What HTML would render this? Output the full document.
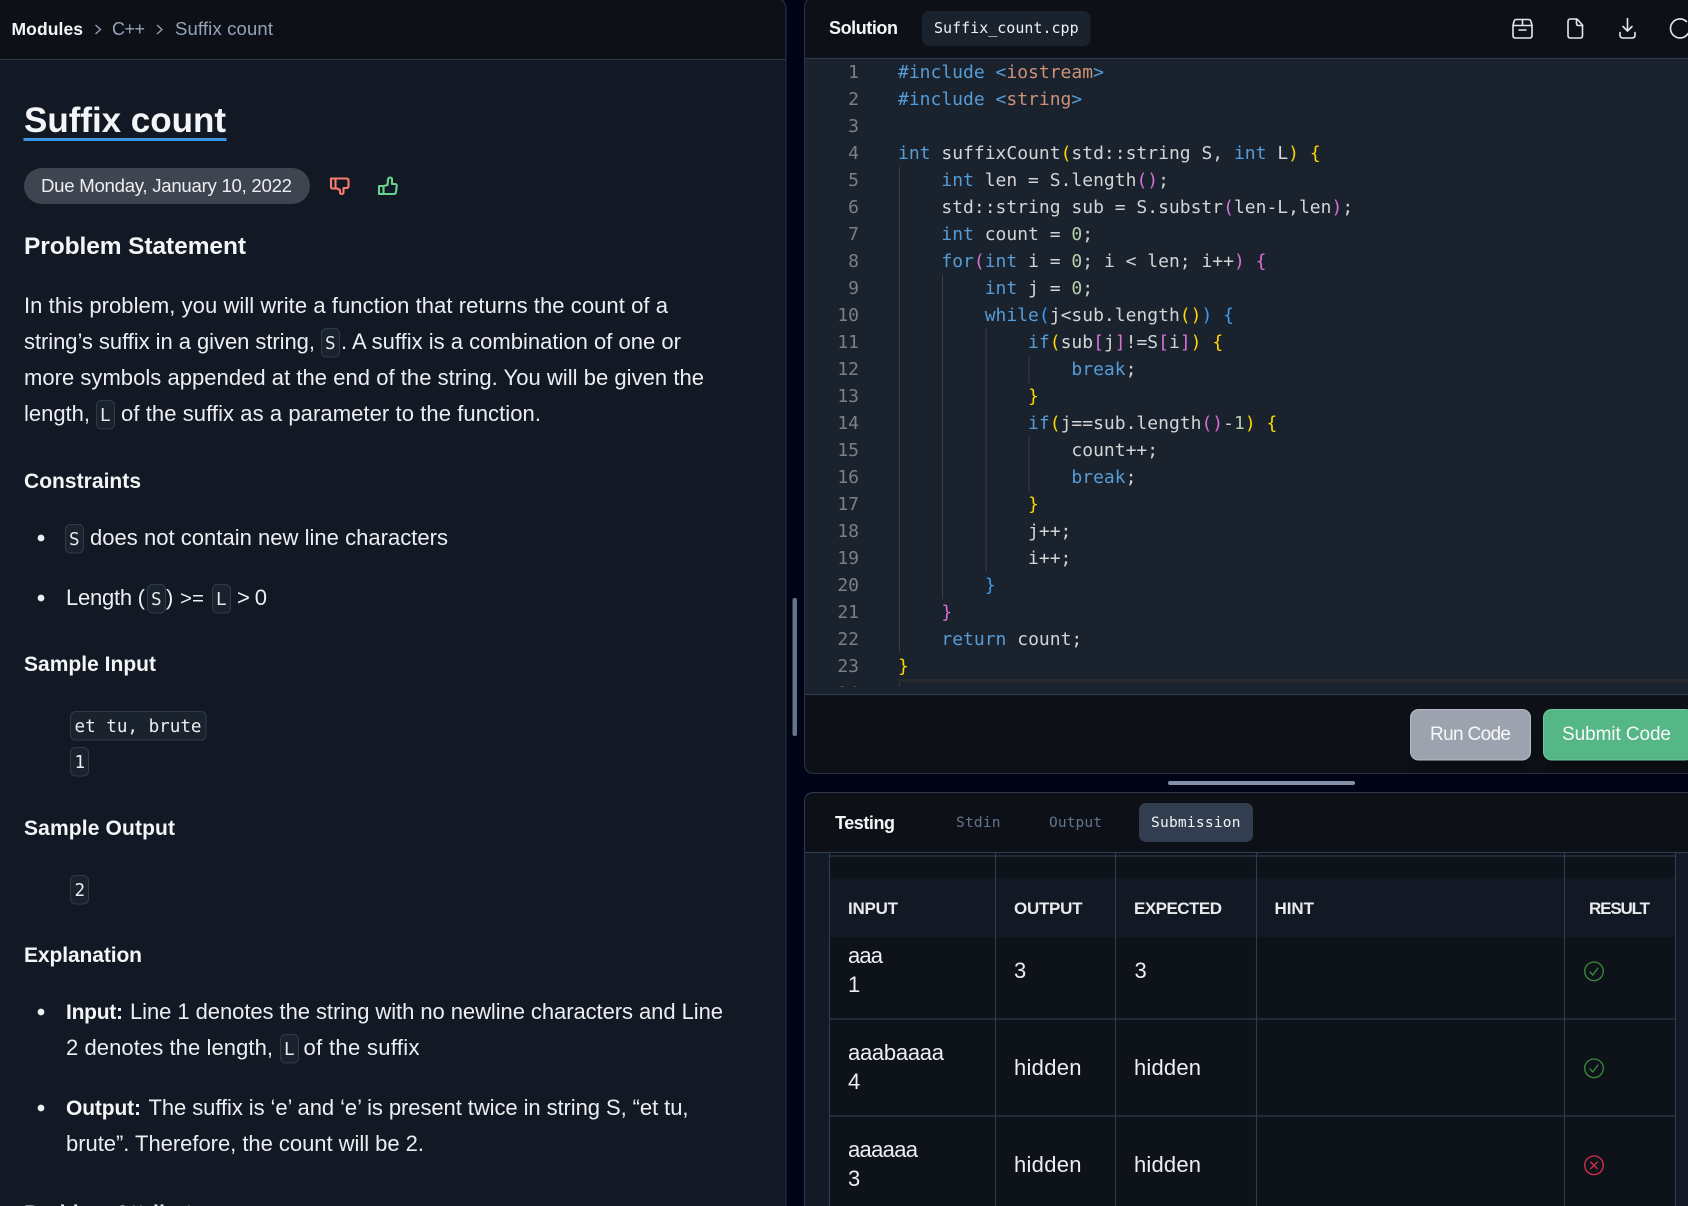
<!DOCTYPE html>
<html lang="en">
<head>
<meta charset="utf-8">
<title>Suffix count</title>
<style>
html,body{margin:0;padding:0;background:#010417;width:1688px;height:1206px;overflow:hidden}
svg{display:block}
text{white-space:pre}
.s{font-family:"Liberation Sans",sans-serif;font-size:22px;fill:#eceef1}
.h{font-family:"Liberation Sans",sans-serif;font-weight:700;fill:#f3f5f7}
.m{font-family:"DejaVu Sans Mono","Liberation Mono",monospace}
.c{font-family:"DejaVu Sans Mono","Liberation Mono",monospace;font-size:18px;fill:#d4d4d4}
.n{font-family:"DejaVu Sans Mono","Liberation Mono",monospace;font-size:18px;fill:#7b8087;text-anchor:end}
.k{fill:#569cd6}.t{fill:#ce9178}.g{fill:#b5cea8}.y{fill:#ffd700}.p{fill:#da70d6}.b{fill:#3f9cf0}
.cb{fill:#1a222e;stroke:#2f3a4c;stroke-width:1}
.th{font-family:"Liberation Sans",sans-serif;font-size:17px;font-weight:700;fill:#e8eaed}
.ln{stroke:#3a3f48;stroke-width:1}
.bd{stroke:#2f3a4c;stroke-width:1.2}
.ic{fill:none;stroke:#e5e7eb;stroke-width:1.6;stroke-linecap:round;stroke-linejoin:round}
</style>
</head>
<body>
<svg xmlns="http://www.w3.org/2000/svg" width="1688" height="1206" viewBox="0 0 1688 1206">
<defs>
<clipPath id="codeclip"><rect x="805" y="59" width="883" height="627.5"/></clipPath>
<filter id="sh" x="-20%" y="-20%" width="140%" height="160%"><feGaussianBlur stdDeviation="6"/></filter>
</defs>
<rect width="1688" height="1206" fill="#010417"/>

<!-- LEFT PANEL -->
<path d="M-2 -2H776Q786 -2 786 8V1208H-2Z" fill="#121924"/>
<path d="M-2 -2H776Q786 -2 786 8V59H-2Z" fill="#0d1117"/>
<path d="M776 -1Q786 -1 786 9V1208" fill="none" stroke="#2a3342" stroke-width="1"/>
<line x1="0" y1="59.5" x2="786" y2="59.5" stroke="#2f3a4c" stroke-width="1"/>

<text x="11.5" y="35" class="h" font-size="17.5" textLength="71.5">Modules</text>
<path d="M95.5 25L100.5 29.5L95.5 34" fill="none" stroke="#94a3b8" stroke-width="1.3"/>
<text x="112" y="35" class="s" style="font-size:18px;fill:#94a3b8" textLength="33">C++</text>
<path d="M157 25L162 29.5L157 34" fill="none" stroke="#94a3b8" stroke-width="1.3"/>
<text x="175" y="35" class="s" style="font-size:18.5px;fill:#94a3b8" textLength="98">Suffix count</text>

<text x="24" y="132" class="h" font-size="35" textLength="202">Suffix count</text>
<rect x="23.5" y="138" width="203" height="3" fill="#3f96e2"/>

<rect x="24" y="168" width="286" height="36" rx="18" fill="#3f4550"/>
<text x="41" y="192" class="s" style="font-size:18.6px" textLength="251">Due Monday, January 10, 2022</text>
<g fill="none" stroke="#f87c6f" stroke-width="2.1" stroke-linejoin="round" stroke-linecap="round">
<path d="M331 178.5H335.5V188.5H332.5Q331 188.5 331 187Z"/>
<path d="M335.5 178.5H346.5Q348.5 178.5 348.5 180.5V186Q348.5 188 346.5 188H343.5V192Q343.5 194 341.5 194Q340 194 340 192.5V190L337 188.5H335.5"/>
</g>
<g fill="none" stroke="#68d391" stroke-width="2.1" stroke-linejoin="round" stroke-linecap="round">
<path d="M379 186H383.5V194H379Z"/>
<path d="M383.5 186L387.5 185L388 179.5Q388.5 177.5 390 177.5Q392 177.5 392 179.5V184H395Q397 184 396.7 186L396 192Q395.7 194 394 194H383.5"/>
</g>

<text x="24" y="254" class="h" font-size="24.5" textLength="222">Problem Statement</text>

<text x="24" y="313" class="s" textLength="644">In this problem, you will write a function that returns the count of a</text>
<text x="24" y="349" class="s" textLength="291">string’s suffix in a given string,</text>
<rect x="321.5" y="328.5" width="18" height="28.5" rx="5" class="cb"/>
<text x="325" y="349" class="m" font-size="17.6" fill="#e8eaed">S</text>
<text x="341" y="349" class="s" textLength="340">. A suffix is a combination of one or</text>
<text x="24" y="385" class="s" textLength="680">more symbols appended at the end of the string. You will be given the</text>
<text x="24" y="421" class="s" textLength="66">length,</text>
<rect x="96.5" y="400.5" width="18" height="28.5" rx="5" class="cb"/>
<text x="100" y="421" class="m" font-size="17.6" fill="#e8eaed">L</text>
<text x="121" y="421" class="s" textLength="420">of the suffix as a parameter to the function.</text>

<text x="24" y="488" class="h" font-size="21" textLength="117">Constraints</text>
<circle cx="41" cy="538" r="3.4" fill="#eceef1"/>
<rect x="65.5" y="524.5" width="18" height="28.5" rx="5" class="cb"/>
<text x="69" y="545" class="m" font-size="17.6" fill="#e8eaed">S</text>
<text x="90" y="545" class="s" textLength="358">does not contain new line characters</text>

<circle cx="41" cy="598" r="3.4" fill="#eceef1"/>
<text x="66" y="605" class="s" textLength="79">Length (</text>
<rect x="147.5" y="584.5" width="18" height="28.5" rx="5" class="cb"/>
<text x="151" y="605" class="m" font-size="17.6" fill="#e8eaed">S</text>
<text x="166" y="605" class="s">)</text>
<text x="180" y="605" class="s" style="font-size:20.5px" textLength="24">&gt;=</text>
<rect x="212.5" y="584.5" width="18" height="28.5" rx="5" class="cb"/>
<text x="216" y="605" class="m" font-size="17.6" fill="#e8eaed">L</text>
<text x="237" y="605" class="s" textLength="30">&gt; 0</text>

<text x="24" y="671" class="h" font-size="21" textLength="132">Sample Input</text>
<rect x="70.5" y="711.5" width="135.5" height="28.5" rx="5" class="cb"/>
<text x="74.5" y="732" class="m" font-size="17.6" fill="#eceef1" textLength="127">et tu, brute</text>
<rect x="70.5" y="747.5" width="18" height="28.5" rx="5" class="cb"/>
<text x="74.5" y="768" class="m" font-size="17.6" fill="#eceef1">1</text>

<text x="24" y="835" class="h" font-size="21" textLength="151">Sample Output</text>
<rect x="70.5" y="875.5" width="18" height="28.5" rx="5" class="cb"/>
<text x="74.5" y="896" class="m" font-size="17.6" fill="#eceef1">2</text>

<text x="24" y="962" class="h" font-size="21" textLength="118">Explanation</text>
<circle cx="41" cy="1012" r="3.4" fill="#eceef1"/>
<text x="66" y="1019" class="h" font-size="21" textLength="57">Input:</text>
<text x="130" y="1019" class="s" textLength="593">Line 1 denotes the string with no newline characters and Line</text>
<text x="66" y="1055" class="s" textLength="207">2 denotes the length,</text>
<rect x="280.5" y="1034.5" width="18" height="28.5" rx="5" class="cb"/>
<text x="284" y="1055" class="m" font-size="17.6" fill="#e8eaed">L</text>
<text x="303.5" y="1055" class="s" textLength="116">of the suffix</text>
<circle cx="41" cy="1108" r="3.4" fill="#eceef1"/>
<text x="66" y="1115" class="h" font-size="21" textLength="75">Output:</text>
<text x="148.5" y="1115" class="s" textLength="540">The suffix is ‘e’ and ‘e’ is present twice in string S, “et tu,</text>
<text x="66" y="1151" class="s" textLength="358">brute”. Therefore, the count will be 2.</text>
<text x="24" y="1220" class="h" font-size="21" textLength="192">Problem Attributes</text>

<rect x="792.5" y="598" width="4.5" height="138" rx="2" fill="#64748b"/>

<!-- RIGHT TOP PANEL -->
<path d="M804.5 -2H1700V773.5H814.5Q804.5 773.5 804.5 763.5V8Q804.5 -2 814.5 -2Z" fill="#0d1117" stroke="#2a3342" stroke-width="1"/>
<rect x="805" y="59" width="883" height="635" fill="#1a222e"/>
<line x1="805" y1="58.5" x2="1688" y2="58.5" stroke="#2f3a4c" stroke-width="1.2"/>
<line x1="805" y1="694.5" x2="1688" y2="694.5" stroke="#2f3a4c" stroke-width="1.2"/>

<text x="829" y="34" class="h" font-size="18" textLength="69">Solution</text>
<rect x="922" y="11" width="168.5" height="35" rx="7" fill="#1a222e"/>
<text x="934" y="33" class="m" font-size="15" fill="#eef0f2" textLength="144.6">Suffix_count.cpp</text>

<!-- toolbar icons -->
<g class="ic">
<path d="M1513 25.5V35.5Q1513 38 1515.5 38H1529.5Q1532 38 1532 35.5V25.5L1531 21.5Q1530.5 19.5 1528.5 19.5H1516.5Q1514.5 19.5 1514 21.5Z"/>
<path d="M1513 25.5H1532M1522.5 19.5V25.5M1519 30H1526"/>
<path d="M1568 21.5Q1568 19 1570.5 19H1577L1582.5 25V35.5Q1582.5 38 1580 38H1570.5Q1568 38 1568 35.5Z"/>
<path d="M1576.5 19.5V23.5Q1576.5 25.5 1578.5 25.5H1582.5"/>
<path d="M1627.5 18.5V31M1623 26.5L1627.5 31L1632 26.5"/>
<path d="M1620 32.5V35Q1620 38 1623 38H1632Q1635 38 1635 35V32.5"/>
<path d="M1686.5 21.5A9.5 9.5 0 1 0 1688 33.6"/>
</g>

<!-- code -->
<g clip-path="url(#codeclip)">
<line class="ln" x1="899.5" y1="167" x2="899.5" y2="652"/>
<line class="ln" x1="942.5" y1="275" x2="942.5" y2="599"/>
<line class="ln" x1="986" y1="328" x2="986" y2="572"/>
<line class="ln" x1="1029" y1="356" x2="1029" y2="383"/>
<line class="ln" x1="1029" y1="437" x2="1029" y2="491"/>
<rect x="898" y="679" width="790" height="3.5" fill="#272a2f"/>
<line class="ln" x1="899.5" y1="683" x2="899.5" y2="688"/>

<g transform="translate(0,-0.8)">
<text class="n" x="859" y="79">1</text><text class="n" x="859" y="106">2</text><text class="n" x="859" y="133">3</text><text class="n" x="859" y="160">4</text><text class="n" x="859" y="187">5</text><text class="n" x="859" y="214">6</text><text class="n" x="859" y="241">7</text><text class="n" x="859" y="268">8</text><text class="n" x="859" y="295">9</text><text class="n" x="859" y="322">10</text><text class="n" x="859" y="349">11</text><text class="n" x="859" y="376">12</text><text class="n" x="859" y="403">13</text><text class="n" x="859" y="430">14</text><text class="n" x="859" y="457">15</text><text class="n" x="859" y="484">16</text><text class="n" x="859" y="511">17</text><text class="n" x="859" y="538">18</text><text class="n" x="859" y="565">19</text><text class="n" x="859" y="592">20</text><text class="n" x="859" y="619">21</text><text class="n" x="859" y="646">22</text><text class="n" x="859" y="673">23</text><text class="n" x="859" y="700">24</text>

<text class="c" x="898" y="79"><tspan class="k">#include &lt;</tspan><tspan class="t">iostream</tspan><tspan class="k">&gt;</tspan></text>
<text class="c" x="898" y="106"><tspan class="k">#include &lt;</tspan><tspan class="t">string</tspan><tspan class="k">&gt;</tspan></text>
<text class="c" x="898" y="160"><tspan class="k">int</tspan> suffixCount<tspan class="y">(</tspan>std::string S, <tspan class="k">int</tspan> L<tspan class="y">)</tspan> <tspan class="y">{</tspan></text>
<text class="c" x="898" y="187">    <tspan class="k">int</tspan> len = S.length<tspan class="p">()</tspan>;</text>
<text class="c" x="898" y="214">    std::string sub = S.substr<tspan class="p">(</tspan>len-L,len<tspan class="p">)</tspan>;</text>
<text class="c" x="898" y="241">    <tspan class="k">int</tspan> count = <tspan class="g">0</tspan>;</text>
<text class="c" x="898" y="268">    <tspan class="k">for</tspan><tspan class="p">(</tspan><tspan class="k">int</tspan> i = <tspan class="g">0</tspan>; i &lt; len; i++<tspan class="p">)</tspan> <tspan class="p">{</tspan></text>
<text class="c" x="898" y="295">        <tspan class="k">int</tspan> j = <tspan class="g">0</tspan>;</text>
<text class="c" x="898" y="322">        <tspan class="k">while</tspan><tspan class="b">(</tspan>j&lt;sub.length<tspan class="y">()</tspan><tspan class="b">)</tspan> <tspan class="b">{</tspan></text>
<text class="c" x="898" y="349">            <tspan class="k">if</tspan><tspan class="y">(</tspan>sub<tspan class="p">[</tspan>j<tspan class="p">]</tspan>!=S<tspan class="p">[</tspan>i<tspan class="p">]</tspan><tspan class="y">)</tspan> <tspan class="y">{</tspan></text>
<text class="c" x="898" y="376">                <tspan class="k">break</tspan>;</text>
<text class="c" x="898" y="403">            <tspan class="y">}</tspan></text>
<text class="c" x="898" y="430">            <tspan class="k">if</tspan><tspan class="y">(</tspan>j==sub.length<tspan class="p">()</tspan>-<tspan class="g">1</tspan><tspan class="y">)</tspan> <tspan class="y">{</tspan></text>
<text class="c" x="898" y="457">                count++;</text>
<text class="c" x="898" y="484">                <tspan class="k">break</tspan>;</text>
<text class="c" x="898" y="511">            <tspan class="y">}</tspan></text>
<text class="c" x="898" y="538">            j++;</text>
<text class="c" x="898" y="565">            i++;</text>
<text class="c" x="898" y="592">        <tspan class="b">}</tspan></text>
<text class="c" x="898" y="619">    <tspan class="p">}</tspan></text>
<text class="c" x="898" y="646">    <tspan class="k">return</tspan> count;</text>
<text class="c" x="898" y="673"><tspan class="y">}</tspan></text>
</g>
</g>

<!-- buttons -->
<rect x="1414" y="722" width="113" height="48" rx="8" fill="#000" opacity=".35" filter="url(#sh)"/>
<rect x="1547" y="722" width="150" height="48" rx="8" fill="#000" opacity=".35" filter="url(#sh)"/>
<rect x="1410.5" y="709.5" width="120" height="50.5" rx="8" fill="#9ca3af" stroke="#b6bcc6" stroke-width="1"/>
<text x="1430" y="740" class="s" style="font-size:19px;fill:#f7f8f9" textLength="81">Run Code</text>
<rect x="1543.5" y="709.5" width="150" height="50.5" rx="8" fill="#55b686" stroke="#6cc89a" stroke-width="1"/>
<text x="1562" y="740" class="s" style="font-size:19px;fill:#f7f8f9" textLength="109">Submit Code</text>

<rect x="1168" y="781" width="187" height="4" rx="2" fill="#8492a8"/>

<!-- BOTTOM PANEL -->
<path d="M804.5 1300V802Q804.5 792.5 814.5 792.5H1700V1300Z" fill="#0d1117" stroke="#2f3a4c" stroke-width="1"/>
<rect x="805" y="853" width="883" height="353" fill="#131a26"/>
<line x1="805" y1="852.5" x2="1688" y2="852.5" stroke="#2f3a4c" stroke-width="1.2"/>

<text x="835" y="829" class="h" font-size="18" textLength="60">Testing</text>
<text x="956" y="827" class="m" font-size="14.5" fill="#64748b" textLength="44.5">Stdin</text>
<text x="1049" y="827" class="m" font-size="14.5" fill="#64748b" textLength="53">Output</text>
<rect x="1139" y="803" width="114" height="39" rx="7" fill="#323d4f"/>
<text x="1151" y="827" class="m" font-size="14.5" fill="#f1f3f5" textLength="89.5">Submission</text>

<!-- table -->
<rect x="829.5" y="853" width="846" height="353" fill="#0e1219"/>
<rect x="829.5" y="878" width="846" height="59" fill="#121924"/>
<line class="bd" x1="829.5" y1="856" x2="1675.5" y2="856"/>
<line class="bd" x1="829.5" y1="1019" x2="1675.5" y2="1019"/>
<line class="bd" x1="829.5" y1="1116" x2="1675.5" y2="1116"/>
<line class="bd" x1="829.5" y1="853" x2="829.5" y2="1206"/>
<line class="bd" x1="995.5" y1="853" x2="995.5" y2="1206"/>
<line class="bd" x1="1115.5" y1="853" x2="1115.5" y2="1206"/>
<line class="bd" x1="1256.5" y1="853" x2="1256.5" y2="1206"/>
<line class="bd" x1="1564.5" y1="853" x2="1564.5" y2="1206"/>
<line class="bd" x1="1675.5" y1="853" x2="1675.5" y2="1206"/>

<text x="848" y="914" class="th" textLength="50">INPUT</text>
<text x="1014" y="914" class="th" textLength="68.5">OUTPUT</text>
<text x="1134" y="914" class="th" textLength="88">EXPECTED</text>
<text x="1274.5" y="914" class="th" textLength="39.5">HINT</text>
<text x="1589" y="914" class="th" textLength="61">RESULT</text>

<text x="848" y="963" class="s" textLength="35">aaa</text>
<text x="848" y="992" class="s">1</text>
<text x="1014" y="978" class="s">3</text>
<text x="1134.5" y="978" class="s">3</text>
<text x="848" y="1060" class="s" textLength="96">aaabaaaa</text>
<text x="848" y="1089" class="s">4</text>
<text x="1014" y="1075" class="s" textLength="67.5">hidden</text>
<text x="1134" y="1075" class="s" textLength="67">hidden</text>
<text x="848" y="1157" class="s" textLength="70">aaaaaa</text>
<text x="848" y="1186" class="s">3</text>
<text x="1014" y="1172" class="s" textLength="67.5">hidden</text>
<text x="1134" y="1172" class="s" textLength="67">hidden</text>

<g fill="none" stroke="#3d8a3f" stroke-width="1.3" stroke-linecap="round" stroke-linejoin="round">
<circle cx="1594" cy="971.3" r="9.3"/>
<path d="M1590 972L1592.8 975L1598 968"/>
<circle cx="1594" cy="1068.3" r="9.3"/>
<path d="M1590 1069L1592.8 1072L1598 1065"/>
</g>
<g fill="none" stroke="#d9304f" stroke-width="1.3" stroke-linecap="round">
<circle cx="1594" cy="1165.3" r="9.3"/>
<path d="M1590.7 1162L1597.3 1168.6M1597.3 1162L1590.7 1168.6"/>
</g>
</svg>
</body>
</html>
